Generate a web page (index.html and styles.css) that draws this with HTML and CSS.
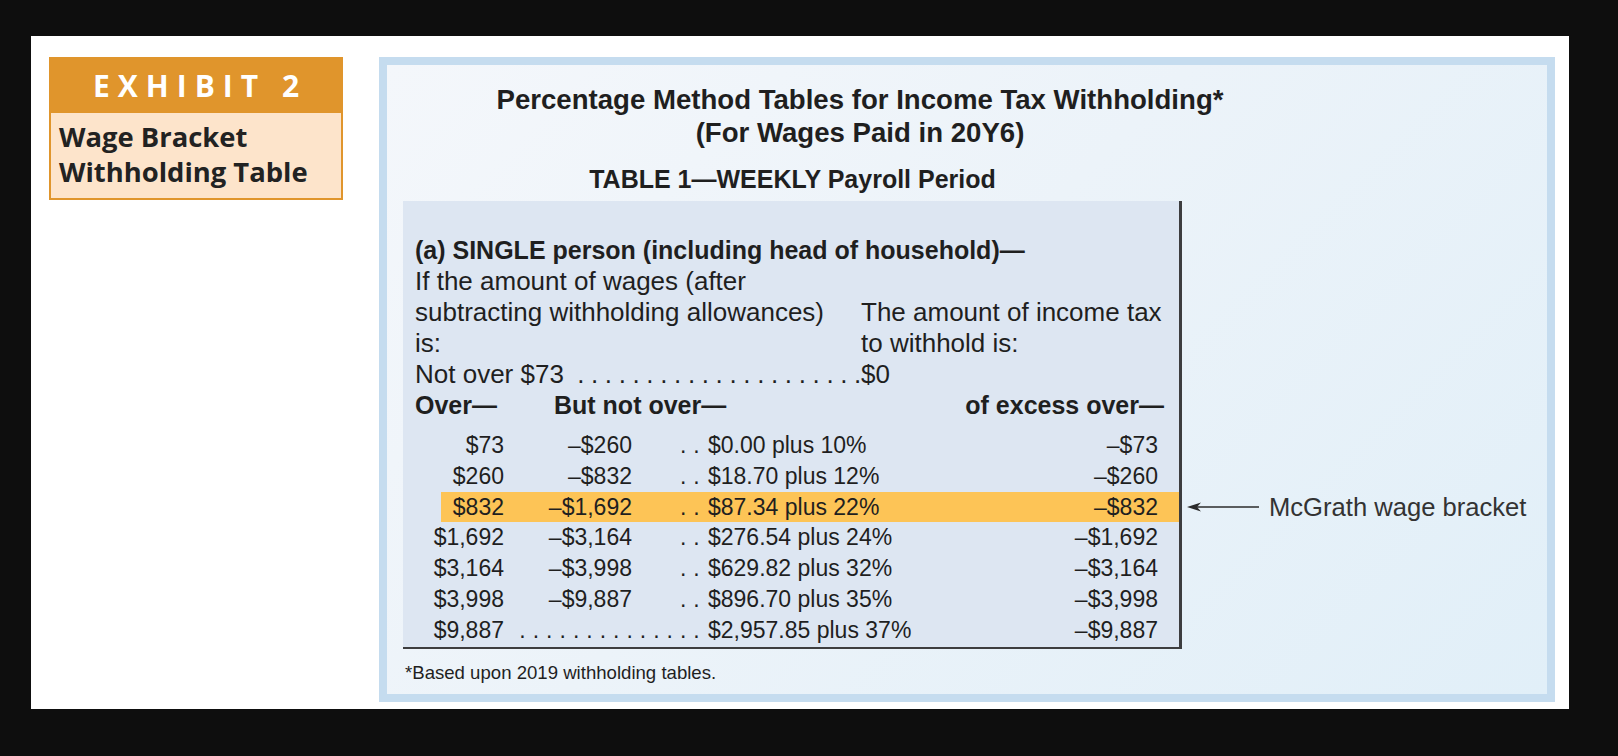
FILE: index.html
```html
<!DOCTYPE html>
<html lang="en">
<head>
<meta charset="utf-8">
<title>Exhibit 2 – Wage Bracket Withholding Table</title>
<link rel="stylesheet" href="styles.css">
</head>
<body>
<div class="page">
  <div class="exhibit">
    <div class="exhibit-head">EXHIBIT 2</div>
    <div class="exhibit-label">Wage Bracket<br>Withholding Table</div>
  </div>

  <div class="panel">
    <div class="title">
      <div>Percentage Method Tables for Income Tax Withholding*</div>
      <div>(For Wages Paid in 20Y6)</div>
    </div>

    <div class="table-wrap">
      <div class="caption">TABLE 1—WEEKLY Payroll Period</div>

      <div class="table">
        <div class="t-head bold">(a) SINGLE person (including head of household)—</div>
        <div class="t-line">
          <div>If the amount of wages (after</div>
          <div></div>
        </div>
        <div class="t-line">
          <div>subtracting withholding allowances)</div>
          <div>The amount of income tax</div>
        </div>
        <div class="t-line">
          <div>is:</div>
          <div>to withhold is:</div>
        </div>
        <div class="t-line">
          <div class="lead-cell"><span>Not over $73</span><span class="leader head-leader">. . . . . . . . . . . . . . . . . . . . .</span></div>
          <div>$0</div>
        </div>
        <div class="t-cols bold">
          <div>Over—</div>
          <div>But not over—</div>
          <div>of excess over—</div>
        </div>

        <div class="rows">
          <div class="row">
            <div class="c-over">$73</div>
            <div class="c-to">–$260</div>
            <div class="leader">. .</div>
            <div class="c-amt">$0.00 plus 10%</div>
            <div class="c-ex">–$73</div>
          </div>
          <div class="row">
            <div class="c-over">$260</div>
            <div class="c-to">–$832</div>
            <div class="leader">. .</div>
            <div class="c-amt">$18.70 plus 12%</div>
            <div class="c-ex">–$260</div>
          </div>
          <div class="row row-hl">
            <div class="c-over">$832</div>
            <div class="c-to">–$1,692</div>
            <div class="leader">. .</div>
            <div class="c-amt">$87.34 plus 22%</div>
            <div class="c-ex">–$832</div>
            <div class="callout">
              <svg class="arrow" width="72" height="12" viewBox="0 0 72 12"><path d="M3 6H72" stroke="#2b2b2b" stroke-width="1.6"/><path d="M0 6L14 1.5L10 6L14 10.5Z" fill="#2b2b2b"/></svg>
              <span>McGrath wage bracket</span>
            </div>
          </div>
          <div class="row">
            <div class="c-over">$1,692</div>
            <div class="c-to">–$3,164</div>
            <div class="leader">. .</div>
            <div class="c-amt">$276.54 plus 24%</div>
            <div class="c-ex">–$1,692</div>
          </div>
          <div class="row">
            <div class="c-over">$3,164</div>
            <div class="c-to">–$3,998</div>
            <div class="leader">. .</div>
            <div class="c-amt">$629.82 plus 32%</div>
            <div class="c-ex">–$3,164</div>
          </div>
          <div class="row">
            <div class="c-over">$3,998</div>
            <div class="c-to">–$9,887</div>
            <div class="leader">. .</div>
            <div class="c-amt">$896.70 plus 35%</div>
            <div class="c-ex">–$3,998</div>
          </div>
          <div class="row">
            <div class="c-over">$9,887</div>
            <div class="leader span2">. . . . . . . . . . . . . .</div>
            <div class="c-amt">$2,957.85 plus 37%</div>
            <div class="c-ex">–$9,887</div>
          </div>
        </div>
      </div>

      <div class="footnote">*Based upon 2019 withholding tables.</div>
    </div>
  </div>
</div>
</body>
</html>
```

FILE: styles.css
```css
* { box-sizing: border-box; }

body {
  margin: 0;
  background: #0e0e0e;
  padding: 36px 0 0 31px;
  font-family: "Liberation Sans", Arial, sans-serif;
  color: #1f1f1f;
}

.page {
  width: 1538px;
  height: 673px;
  background: #ffffff;
  display: flex;
  align-items: flex-start;
  gap: 36px;
  padding: 21px 14px 7px 18px;
}

/* Exhibit label */
.exhibit {
  width: 294px;
  flex: none;
  border: 2px solid #e0952c;
  background: #fde4cb;
}

.exhibit-head {
  height: 54px;
  background: #e0952c;
  color: #ffffff;
  font-family: "Open Sans", "Liberation Sans", sans-serif;
  font-weight: 700;
  font-size: 30px;
  letter-spacing: 8px;
  text-indent: 8px;
  line-height: 54px;
  text-align: center;
}

.exhibit-label {
  padding: 6px 8px 9px;
  font-family: "Open Sans", "Liberation Sans", sans-serif;
  font-weight: 700;
  font-size: 27.4px;
  line-height: 35px;
  color: #222222;
}

/* Blue panel */
.panel {
  flex: 1;
  align-self: stretch;
  border: 8px solid #c5dcef;
  background: linear-gradient(135deg, #f4f7fb 0%, #ecf3f9 45%, #e1eff8 100%);
  padding: 18px 0 0 16px;
}

.title {
  width: 914px;
  text-align: center;
  font-weight: 700;
  font-size: 27.6px;
  line-height: 33px;
  color: #1f1f1f;
  white-space: nowrap;
}

.table-wrap {
  width: 779px;
  margin-top: 15px;
}

.caption {
  text-align: center;
  font-weight: 700;
  font-size: 25px;
  line-height: 30px;
  margin-bottom: 7px;
}

.table {
  background: #dde6f2;
  border-right: 3px solid #3d3d3f;
  border-bottom: 2px solid #3d3d3f;
  padding: 33px 0 1px 0;
}

.bold { font-weight: 700; font-size: 25px; }

.t-head {
  padding-left: 12px;
  line-height: 32px;
  white-space: nowrap;
}

.t-line {
  display: grid;
  grid-template-columns: 446px 1fr;
  padding-left: 12px;
  font-size: 26px;
  line-height: 31px;
  white-space: nowrap;
}

.lead-cell {
  display: flex;
  min-width: 0;
}

.leader {
  flex: 1;
  min-width: 0;
  text-align: right;
  white-space: nowrap;
}

.head-leader {
  letter-spacing: -0.3px;
}

.t-cols {
  display: grid;
  grid-template-columns: 139px 1fr auto;
  padding: 0 15px 0 12px;
  line-height: 31px;
  margin-bottom: 9px;
}

.rows {
  font-size: 23px;
}

.row {
  position: relative;
  display: grid;
  grid-template-columns: 101px 128px 76px 1fr auto;
  padding-right: 21px;
  height: 30.8px;
  line-height: 30.8px;
  white-space: nowrap;
}

.row .leader {
  padding-right: 8px;
  letter-spacing: 0.3px;
}

.row .span2 { grid-column: 2 / span 2; }

.c-over, .c-to, .c-ex { text-align: right; }

.row-hl {
  background: linear-gradient(to right, transparent 38px, #fdc456 38px);
}

.callout {
  position: absolute;
  left: calc(100% + 8px);
  top: 0;
  height: 100%;
  display: flex;
  align-items: center;
  gap: 10px;
  font-size: 25.6px;
  color: #333333;
}

.arrow { display: block; }

.footnote {
  margin-top: 12px;
  padding-left: 2px;
  font-size: 18.6px;
  line-height: 24px;
}
```
